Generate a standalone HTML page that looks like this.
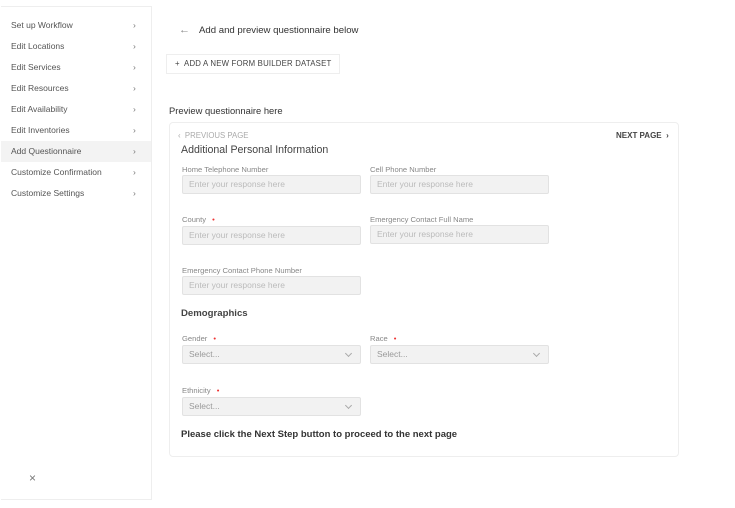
<!DOCTYPE html>
<html><head><meta charset="utf-8"><style>
*{box-sizing:border-box;margin:0;padding:0}
body{width:735px;height:508px;background:#fff;font-family:"Liberation Sans",sans-serif;position:relative;overflow:hidden;color:#333}
.a{position:absolute;white-space:nowrap}
.side{position:absolute;left:1px;top:6px;width:151px;height:494px;border:1px solid #eee;border-left:none}
.item{position:absolute;left:0;width:150px;height:21px;font-size:8.5px;color:#555;padding-left:10px;line-height:21px}
.item span{position:absolute;left:132px;color:#777}
.act{background:#f3f3f3}
.card{position:absolute;left:169px;top:122px;width:510px;height:335px;border:1px solid #eee;border-radius:4px}
.lbl{position:absolute;font-size:7.6px;color:#888}
.lbl i{color:#e33;font-style:normal;margin-left:6px}
.inp{position:absolute;width:179px;height:19px;background:#f2f2f2;border:1px solid #e2e2e2;border-radius:2px;font-size:8.5px;color:#bbb;padding-left:6px;line-height:17px}
.sel{color:#999}
.sel:after{content:"";position:absolute;right:9px;top:5px;width:4px;height:4px;border-right:1px solid #aaa;border-bottom:1px solid #aaa;transform:rotate(45deg)}
</style></head><body>
<div class="side">
<div class="item" style="top:8px">Set up Workflow<span>›</span></div>
<div class="item" style="top:29px">Edit Locations<span>›</span></div>
<div class="item" style="top:50px">Edit Services<span>›</span></div>
<div class="item" style="top:71px">Edit Resources<span>›</span></div>
<div class="item" style="top:92px">Edit Availability<span>›</span></div>
<div class="item" style="top:113px">Edit Inventories<span>›</span></div>
<div class="item act" style="top:134px">Add Questionnaire<span>›</span></div>
<div class="item" style="top:155px">Customize Confirmation<span>›</span></div>
<div class="item" style="top:176px">Customize Settings<span>›</span></div>
<div class="a" style="left:28px;top:464px;font-size:12px;color:#777">×</div>
</div>
<div class="a" style="left:179px;top:24px;font-size:11px;color:#888">←</div>
<div class="a" style="left:199px;top:25px;font-size:9.6px;color:#333">Add and preview questionnaire below</div>
<div class="a" style="left:166px;top:54px;width:174px;height:20px;border:1px solid #eee;font-size:7.8px;color:#444;line-height:18px;padding-left:8px;letter-spacing:.2px">+&nbsp; ADD A NEW FORM BUILDER DATASET</div>
<div class="a" style="left:169px;top:105px;font-size:9.4px;color:#333">Preview questionnaire here</div>
<div class="card"></div>
<div class="a" style="left:178px;top:131px;font-size:7.8px;color:#aaa">‹&nbsp; PREVIOUS PAGE</div>
<div class="a" style="left:616px;top:131px;font-size:8px;color:#444;font-weight:bold">NEXT PAGE &nbsp;›</div>
<div class="a" style="left:181px;top:144px;font-size:10.6px;color:#444">Additional Personal Information</div>
<div class="lbl" style="left:182px;top:165px">Home Telephone Number</div>
<div class="inp" style="left:182px;top:175px">Enter your response here</div>
<div class="lbl" style="left:370px;top:165px">Cell Phone Number</div>
<div class="inp" style="left:370px;top:175px">Enter your response here</div>
<div class="lbl" style="left:182px;top:215px">County<i>•</i></div>
<div class="inp" style="left:182px;top:226px">Enter your response here</div>
<div class="lbl" style="left:370px;top:215px">Emergency Contact Full Name</div>
<div class="inp" style="left:370px;top:225px">Enter your response here</div>
<div class="lbl" style="left:182px;top:266px">Emergency Contact Phone Number</div>
<div class="inp" style="left:182px;top:276px">Enter your response here</div>
<div class="a" style="left:181px;top:308px;font-size:9.6px;color:#444;font-weight:bold">Demographics</div>
<div class="lbl" style="left:182px;top:334px">Gender<i>•</i></div>
<div class="inp sel" style="left:182px;top:345px">Select...</div>
<div class="lbl" style="left:370px;top:334px">Race<i>•</i></div>
<div class="inp sel" style="left:370px;top:345px">Select...</div>
<div class="lbl" style="left:182px;top:386px">Ethnicity<i>•</i></div>
<div class="inp sel" style="left:182px;top:397px">Select...</div>
<div class="a" style="left:181px;top:429px;font-size:9.5px;color:#333;font-weight:bold">Please click the Next Step button to proceed to the next page</div>
</body></html>
